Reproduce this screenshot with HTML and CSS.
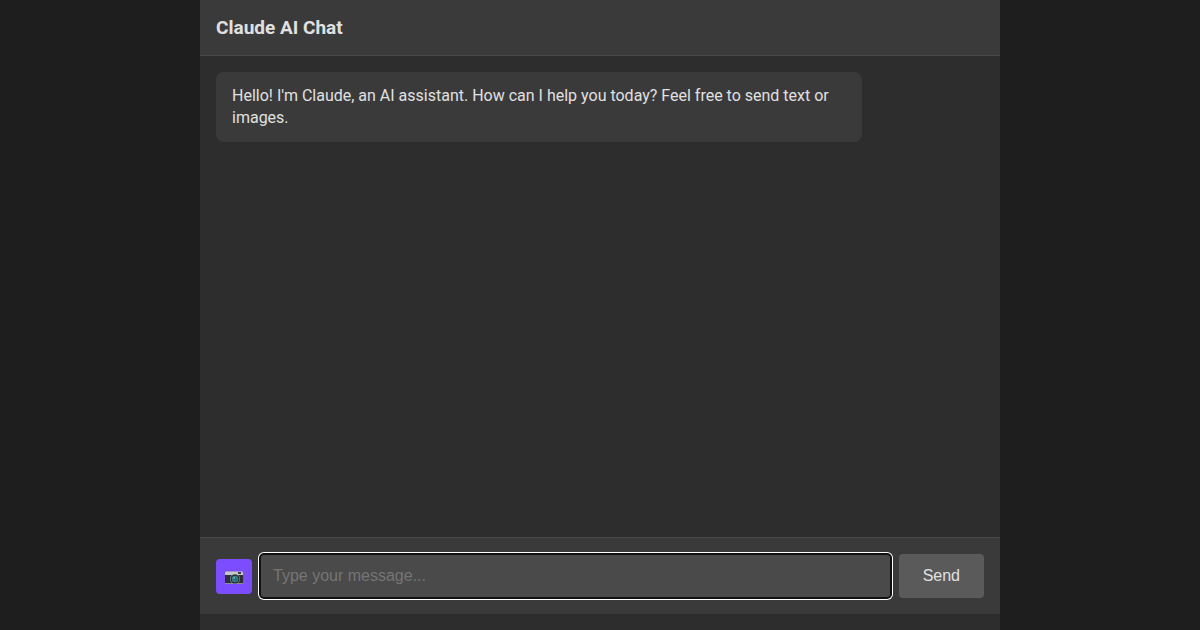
FILE: index.html
```html
<!DOCTYPE html>
<html lang="en">
<head>
<meta charset="utf-8">
<meta name="viewport" content="width=device-width, initial-scale=1">
<title>Claude AI Chat</title>
<link rel="stylesheet" href="styles.css">
</head>
<body>
<div class="chat">
  <header class="chat-header">
    <h1 class="chat-title">Claude AI Chat</h1>
  </header>
  <main class="messages">
    <div class="message">Hello! I'm Claude, an AI assistant. How can I help you today? Feel free to send text or images.</div>
  </main>
  <form class="composer">
    <button class="upload" type="button" aria-label="Attach image">
      <svg class="camera" viewBox="0 0 20 16" aria-hidden="true">
        <rect x="3" y="2" width="3" height="1" fill="#777087"/>
        <rect x="1" y="3" width="18" height="12" rx="1" fill="#302f32"/>
        <path d="M2 2.500h16q1 0 1 1V6H1V3.500q0-1 1-1z" fill="#c5c9c8"/>
        <rect x="14" y="3" width="3" height="2" fill="#3f4446"/>
        <rect x="1" y="14" width="18" height="1" fill="#8b8b96"/>
        <circle cx="11" cy="10" r="5" fill="#9da4a5"/>
        <circle cx="11" cy="10" r="4.500" fill="#202c30"/>
        <circle cx="11" cy="10" r="3.300" fill="#35808c"/>
        <circle cx="11" cy="10" r="1.800" fill="#27616d"/>
        <circle cx="10.300" cy="9" r="0.900" fill="#70b5bd"/>
      </svg>
    </button>
    <input class="message-input" type="text" aria-label="Message" placeholder="Type your message...">
    <button class="send" type="submit">Send</button>
  </form>
  <div class="preview"></div>
</div>
</body>
</html>
```
FILE: styles.css
```css
body {
  margin: 0;
  background: #1e1e1e;
  color: #e0e0e0;
  font-family: Roboto, sans-serif;
}

.chat {
  display: flex;
  flex-direction: column;
  max-width: 800px;
  height: 100vh;
  margin: 0 auto;
  background: #2d2d2d;
}

.chat-header {
  padding: 16px;
  background: #3a3a3a;
  border-bottom: 1px solid #4a4a4a;
}

.chat-title {
  margin: 0;
  font-size: 19px;
  line-height: 23px;
  font-weight: bold;
}

.messages {
  flex: 1;
  padding: 16px;
  overflow-y: auto;
}

.message {
  max-width: 80%;
  padding: 13px 16px;
  border-radius: 8px;
  background: #3a3a3a;
  font-size: 16px;
  line-height: 22px;
}

.composer {
  display: flex;
  align-items: center;
  gap: 8px;
  padding: 16px;
  background: #3a3a3a;
  border-top: 1px solid #4a4a4a;
}

.upload,
.send {
  border: 0;
  border-radius: 4px;
  cursor: pointer;
}

.upload {
  display: flex;
  padding: 10px 8px 9px;
  background: #7c4dff;
}

.camera {
  width: 20px;
  height: 16px;
}

.message-input,
.send {
  font-family: "Liberation Sans", Arial, sans-serif;
  font-size: 16px;
  line-height: 18px;
}

.message-input {
  flex: 1;
  min-width: 0;
  padding: 13px;
  border: 0;
  border-radius: 4px;
  outline: 0;
  background: #4a4a4a;
  color: #e0e0e0;
  box-shadow: inset 0 0 0 1px #101010, 0 0 0 1px #101010, 0 0 0 2px #fff;
}

.message-input::placeholder {
  color: #757575;
}

.send {
  padding: 13px 24px;
  background: #5a5a5a;
  color: #e0e0e0;
}

.preview {
  height: 16px;
}
```
